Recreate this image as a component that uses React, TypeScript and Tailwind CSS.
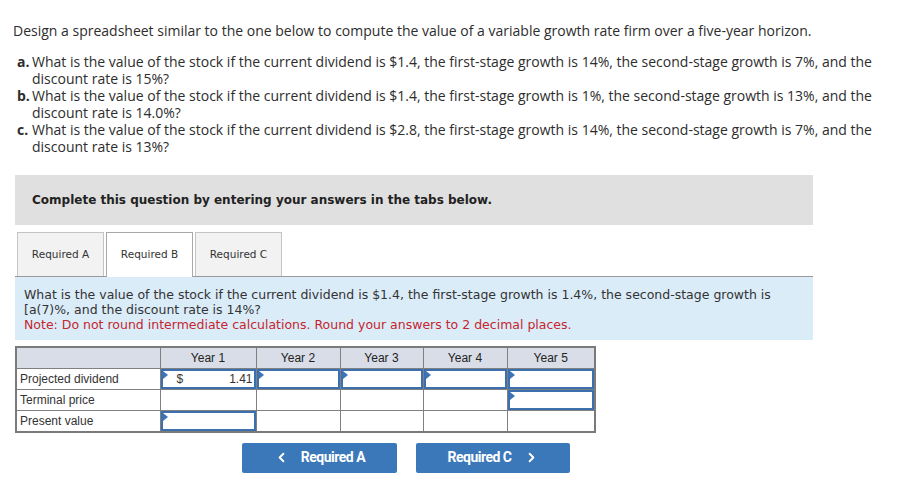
import { ChevronLeft, ChevronRight } from "lucide-react";

const years = ["Year 1", "Year 2", "Year 3", "Year 4", "Year 5"];

// which cells are input boxes: [row][col]
const inputs = [
  [true, true, true, true, true],
  [false, false, false, false, true],
  [true, false, false, false, false],
];
const labels = ["Projected dividend", "Terminal price", "Present value"];
const colW = ["w-[96px]", "w-[84px]", "w-[83px]", "w-[84px]", "w-[88px]"];

function Marker() {
  return (
    <span className="absolute left-0 top-0 w-0 h-0 border-t-[4px] border-b-[4px] border-l-[5px] border-t-transparent border-b-transparent border-l-[#3b74b8]" />
  );
}

function Cell({ input, children }: { input: boolean; children?: React.ReactNode }) {
  return (
    <td className="border border-[#808080] p-0 h-[20px] align-middle">
      {input ? (
        <div className="relative h-[20px] border-2 border-[#3b6fae] flex items-center px-[14px] justify-between">
          <Marker />
          {children}
        </div>
      ) : (
        <div className="h-[20px]" />
      )}
    </td>
  );
}

export default function App() {
  return (
    <div className="w-[903px] h-[487px] bg-white text-[#333] relative overflow-hidden">
      <div className="pt-[22px] pl-[13px] w-[885px] font-['Open_Sans',sans-serif] text-[14px] leading-[17px] text-[#2d2d2d]">
        <p>Design a spreadsheet similar to the one below to compute the value of a variable growth rate firm over a five-year horizon.</p>
        <ol className="mt-[14px] pl-[4px]">
          <li className="flex">
            <span className="w-[15px] shrink-0 font-bold">a.</span>
            <span>What is the value of the stock if the current dividend is $1.4, the first-stage growth is 14%, the second-stage growth is 7%, and the discount rate is 15%?</span>
          </li>
          <li className="flex">
            <span className="w-[15px] shrink-0 font-bold">b.</span>
            <span>What is the value of the stock if the current dividend is $1.4, the first-stage growth is 1%, the second-stage growth is 13%, and the discount rate is 14.0%?</span>
          </li>
          <li className="flex">
            <span className="w-[15px] shrink-0 font-bold">c.</span>
            <span>What is the value of the stock if the current dividend is $2.8, the first-stage growth is 14%, the second-stage growth is 7%, and the discount rate is 13%?</span>
          </li>
        </ol>
      </div>

      <div className="ml-[15px] w-[798px] mt-[20px] h-[50px] bg-[#e0e0e0] flex items-center pl-[17px] font-['DejaVu_Sans',sans-serif] text-[12px] font-bold text-[#222]">
        Complete this question by entering your answers in the tabs below.
      </div>

      <div className="ml-[17px] mt-[7px] flex gap-[2px] font-['DejaVu_Sans',sans-serif] text-[10.5px] text-[#333]">
        <div className="w-[87px] h-[44px] bg-[#f2f2f2] border border-[#c4c4c4] border-b-0 flex items-center justify-center">Required A</div>
        <div className="w-[87px] h-[45px] bg-white border border-[#a8a8a8] border-b-0 flex items-center justify-center -mb-px relative z-10">Required B</div>
        <div className="w-[87px] h-[44px] bg-[#f2f2f2] border border-[#c4c4c4] border-b-0 flex items-center justify-center">Required C</div>
      </div>

      <div className="ml-[15px] w-[798px] h-[64px] bg-[#dbecf9] border-t border-[#9a9a9a] pl-[9px] pr-[40px] pt-[10px] font-['DejaVu_Sans',sans-serif] text-[12.5px] leading-[15px] text-[#333]">
        <p>What is the value of the stock if the current dividend is $1.4, the first-stage growth is 1.4%, the second-stage growth is [a(7)%, and the discount rate is 14%?</p>
        <p className="text-[#c4262e]">Note: Do not round intermediate calculations. Round your answers to 2 decimal places.</p>
      </div>

      <table className="ml-[15px] mt-[6px] border-collapse border-2 border-[#7a7a7a] font-['Liberation_Sans',sans-serif] text-[12px] text-[#333]">
        <thead>
          <tr className="bg-[#d9dde7] h-[21px]">
            <th className="w-[144px] border border-[#808080]" />
            {years.map((y, i) => (
              <th key={y} className={`${colW[i]} border border-[#808080] font-normal text-[#222]`}>
                {y}
              </th>
            ))}
          </tr>
        </thead>
        <tbody>
          {labels.map((l, r) => (
            <tr key={l}>
              <td className="border border-[#808080] pl-[3px] h-[20px] text-left">{l}</td>
              {inputs[r].map((inp, c) => (
                <Cell key={c} input={inp}>
                  {r === 0 && c === 0 ? (
                    <>
                      <span>$</span>
                      <span className="-mr-[13px]">1.41</span>
                    </>
                  ) : null}
                </Cell>
              ))}
            </tr>
          ))}
        </tbody>
      </table>

      <div className="ml-[242px] mt-[10px] flex gap-[19px] font-['Roboto',sans-serif] text-[14px] font-bold text-white tracking-[-0.5px]">
        <button className="w-[155px] h-[30px] bg-[#3b78ba] rounded-[2px] flex items-center justify-center gap-[12px]">
          <ChevronLeft size={15} strokeWidth={3} />
          <span>Required A</span>
        </button>
        <button className="w-[154px] h-[30px] bg-[#3b78ba] rounded-[2px] flex items-center justify-center gap-[12px]">
          <span>Required C</span>
          <ChevronRight size={15} strokeWidth={3} />
        </button>
      </div>
    </div>
  );
}
